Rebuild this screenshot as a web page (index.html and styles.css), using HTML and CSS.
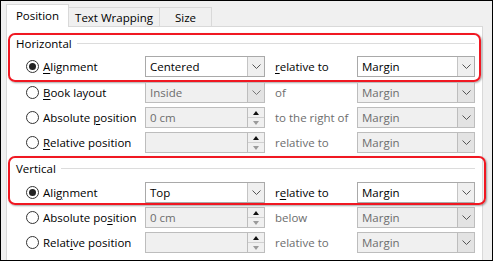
FILE: index.html
```html
<!DOCTYPE html>
<html>
<head>
<meta charset="utf-8">
<link rel="stylesheet" href="styles.css">
</head>
<body>
<div class="frame">
  <div class="tabs">
    <div class="tab tab-active tab-pos">Position</div>
    <div class="tab tab-wrap">Text Wrapping</div>
    <div class="tab tab-size">Size</div>
  </div>
  <div class="panel">
    <div class="hl hl-h">
      <div class="group-title"><span>Horizontal</span><i class="rule"></i></div>
      <div class="row row-in">
        <div class="opt"><span class="radio checked"></span><span><u>A</u>lignment</span></div>
        <div class="combo"><span class="val">Centered</span><span class="btn"><svg width="9" height="5" viewBox="0 0 9 5"><polyline points="0.5,0.5 4.5,4.5 8.5,0.5" fill="none" stroke="#555" stroke-width="1"/></svg></span></div>
        <div class="lbl"><u>r</u>elative to</div>
        <div class="combo"><span class="val">Margin</span><span class="btn"><svg width="9" height="5" viewBox="0 0 9 5"><polyline points="0.5,0.5 4.5,4.5 8.5,0.5" fill="none" stroke="#555" stroke-width="1"/></svg></span></div>
      </div>
    </div>
    <div class="row row-out row-first">
      <div class="opt"><span class="radio"></span><span><u>B</u>ook layout</span></div>
      <div class="combo off"><span class="val">Inside</span><span class="btn"><svg width="9" height="5" viewBox="0 0 9 5"><polyline points="0.5,0.5 4.5,4.5 8.5,0.5" fill="none" stroke="#777" stroke-width="1"/></svg></span></div>
      <div class="lbl off">of</div>
      <div class="combo off"><span class="val">Margin</span><span class="btn"><svg width="9" height="5" viewBox="0 0 9 5"><polyline points="0.5,0.5 4.5,4.5 8.5,0.5" fill="none" stroke="#555" stroke-width="1"/></svg></span></div>
    </div>
    <div class="row row-out">
      <div class="opt"><span class="radio"></span><span>Absolute <u>p</u>osition</span></div>
      <div class="combo off"><span class="val">0 cm</span><span class="spin"><span class="up"></span><span class="dn"></span></span></div>
      <div class="lbl off">to the right of</div>
      <div class="combo off"><span class="val">Margin</span><span class="btn"><svg width="9" height="5" viewBox="0 0 9 5"><polyline points="0.5,0.5 4.5,4.5 8.5,0.5" fill="none" stroke="#555" stroke-width="1"/></svg></span></div>
    </div>
    <div class="row row-out">
      <div class="opt"><span class="radio"></span><span><u>R</u>elative position</span></div>
      <div class="combo off"><span class="val"></span><span class="spin"><span class="up"></span><span class="dn"></span></span></div>
      <div class="lbl off">relative to</div>
      <div class="combo off"><span class="val">Margin</span><span class="btn"><svg width="9" height="5" viewBox="0 0 9 5"><polyline points="0.5,0.5 4.5,4.5 8.5,0.5" fill="none" stroke="#555" stroke-width="1"/></svg></span></div>
    </div>

    <div class="hl hl-v">
      <div class="group-title"><span>Vertical</span><i class="rule"></i></div>
      <div class="row row-in">
        <div class="opt"><span class="radio checked"></span><span>Ali<u>g</u>nment</span></div>
        <div class="combo"><span class="val">Top</span><span class="btn"><svg width="9" height="5" viewBox="0 0 9 5"><polyline points="0.5,0.5 4.5,4.5 8.5,0.5" fill="none" stroke="#555" stroke-width="1"/></svg></span></div>
        <div class="lbl">r<u>e</u>lative to</div>
        <div class="combo"><span class="val">Margin</span><span class="btn"><svg width="9" height="5" viewBox="0 0 9 5"><polyline points="0.5,0.5 4.5,4.5 8.5,0.5" fill="none" stroke="#555" stroke-width="1"/></svg></span></div>
      </div>
    </div>
    <div class="row row-out row-first-v">
      <div class="opt"><span class="radio"></span><span>Absolute po<u>s</u>ition</span></div>
      <div class="combo off"><span class="val">0 cm</span><span class="spin"><span class="up"></span><span class="dn"></span></span></div>
      <div class="lbl off">below</div>
      <div class="combo off"><span class="val">Margin</span><span class="btn"><svg width="9" height="5" viewBox="0 0 9 5"><polyline points="0.5,0.5 4.5,4.5 8.5,0.5" fill="none" stroke="#555" stroke-width="1"/></svg></span></div>
    </div>
    <div class="row row-out">
      <div class="opt"><span class="radio"></span><span>Relat<u>i</u>ve position</span></div>
      <div class="combo off"><span class="val"></span><span class="spin"><span class="up"></span><span class="dn"></span></span></div>
      <div class="lbl off">relative to</div>
      <div class="combo off"><span class="val">Margin</span><span class="btn"><svg width="9" height="5" viewBox="0 0 9 5"><polyline points="0.5,0.5 4.5,4.5 8.5,0.5" fill="none" stroke="#555" stroke-width="1"/></svg></span></div>
    </div>
  </div>
</div>
</body>
</html>
```
FILE: styles.css
```css
* { box-sizing: border-box; }
html, body { margin: 0; padding: 0; background: #fff; }
body { font-family: "Open Sans", "Noto Sans", sans-serif; font-size: 11.5px; color: #000; }

.frame {
  width: 493px; height: 261px;
  border: 1px solid #000;
  background: #f0f0f0;
  overflow: hidden;
  position: relative;
}

.tabs {
  display: flex;
  align-items: flex-end;
  height: 25px;
  padding-left: 5px;
  position: relative;
  z-index: 2;
}
.tab {
  height: 19px;
  border: 1px solid #d9d9d9;
  border-bottom: none;
  background: #f0f0f0;
  display: flex;
  align-items: center;
  justify-content: center;
  margin-left: -1px;
  padding-top: 1px;
}
.tab-pos { margin-left: 0; width: 63px; }
.tab-wrap { width: 92px; }
.tab-size { width: 53px; }
.tab-active {
  height: 23px;
  margin-bottom: -1px;
  background: #fff;
  position: relative;
  z-index: 3;
  padding-top: 0;
  padding-bottom: 1px;
}

.panel {
  margin-left: 5px;
  width: 477px;
  height: 250px;
  background: #fff;
  border: 1px solid #d9d9d9;
  position: relative;
  z-index: 1;
}

.hl {
  margin-left: 1px;
  border: 2px solid #f01822;
  border-radius: 7px;
  box-shadow: 1px 1px 2px rgba(0,0,0,0.35);
}
.hl-h { margin-top: 6px; width: 473px; height: 49px; }
.hl-v { margin-top: 3px; width: 478px; height: 49px; padding-top: 2px; }

.group-title {
  display: flex;
  align-items: center;
  height: 16px;
  padding-left: 6px;
}
.group-title .rule {
  flex: 1;
  height: 1px;
  background: #dcdcdc;
  margin-left: 5px;
  margin-right: 4px;
}
.hl-v .group-title .rule { margin-right: 9px; }

.row {
  display: grid;
  grid-template-columns: 119px 120px 92px 118px;
  align-items: center;
  height: 21px;
}
.row-in { margin-left: 16px; margin-top: 5px; }
.hl-v .row-in { margin-top: 6px; }
.row-out { margin-left: 19px; margin-top: 4px; }
.row-first { margin-top: 0; }
.row-first-v { margin-top: 2px; }

.opt { display: flex; align-items: center; gap: 4px; white-space: nowrap; }
.radio {
  width: 13px; height: 13px;
  border: 1px solid #333;
  border-radius: 50%;
  background: #fff;
  display: flex; align-items: center; justify-content: center;
  flex: none;
}
.radio.checked::after {
  content: "";
  width: 7px; height: 7px;
  border-radius: 50%;
  background: #222;
}

u { text-decoration: underline; text-underline-offset: 2px; text-decoration-thickness: 1px; }

.lbl { padding-left: 10px; white-space: nowrap; }
.lbl.off { color: #6d6d6d; }

.combo {
  height: 21px;
  border: 1px solid #a9a9a9;
  background: #fff;
  display: flex;
  align-items: stretch;
}
.combo .val { flex: 1; padding-left: 4px; display: flex; align-items: center; }
.combo .btn {
  width: 17px;
  border-left: 1px solid #c4c4c4;
  background: #efefef;
  display: flex; align-items: center; justify-content: center;
}
.combo.off { background: #f0f0f0; border-color: #bdbdbd; }
.combo.off .val { color: #6d6d6d; }
.combo.off .btn { background: #e3e3e3; border-left-color: #bdbdbd; }

.spin {
  width: 17px;
  border-left: 1px solid #bdbdbd;
  display: flex; flex-direction: column;
  background: #f0f0f0;
}
.spin .up, .spin .dn {
  flex: 1;
  display: flex; align-items: center; justify-content: center;
}
.spin .up { border-bottom: 1px solid #d0d0d0; }
.spin .up::after {
  content: ""; width: 0; height: 0;
  border-left: 3px solid transparent; border-right: 3px solid transparent;
  border-bottom: 4px solid #111;
}
.spin .dn::after {
  content: ""; width: 0; height: 0;
  border-left: 3px solid transparent; border-right: 3px solid transparent;
  border-top: 4px solid #9a9a9a;
}
```
